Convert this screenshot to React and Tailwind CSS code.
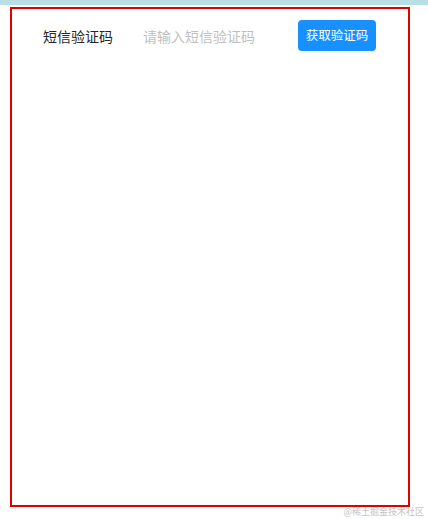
export default function App() {
    return (
        <div className="relative w-[428px] h-[519px] bg-white overflow-hidden" style={{ fontFamily: '"Noto Sans CJK SC", "Noto Sans", sans-serif' }}>
            <div className="h-[5px] bg-[#b9dfe4]" />
            <div className="ml-[10px] mt-[2px] w-[400px] h-[500px] border-2 border-[#e00000]">
                <div className="flex items-center h-[31px] mt-[11px] pl-[31px] pr-[32px]">
                    <label className="text-[14px] text-[#262626] whitespace-nowrap leading-none">短信验证码</label>
                    <input
                        className="flex-1 min-w-0 ml-[30px] text-[14px] leading-none text-[#262626] placeholder:text-[#bfbfbf] outline-none bg-transparent"
                        placeholder="请输入短信验证码"
                    />
                    <button className="w-[78px] h-[31px] rounded-[4px] bg-[#1890ff] text-white text-[12.5px] leading-none whitespace-nowrap">
                        获取验证码
                    </button>
                </div>
            </div>
            <div className="absolute right-[4px] bottom-[3px] text-[9px] text-[#c4c4c4] leading-none whitespace-nowrap">
                @稀土掘金技术社区
            </div>
        </div>
    )
}
